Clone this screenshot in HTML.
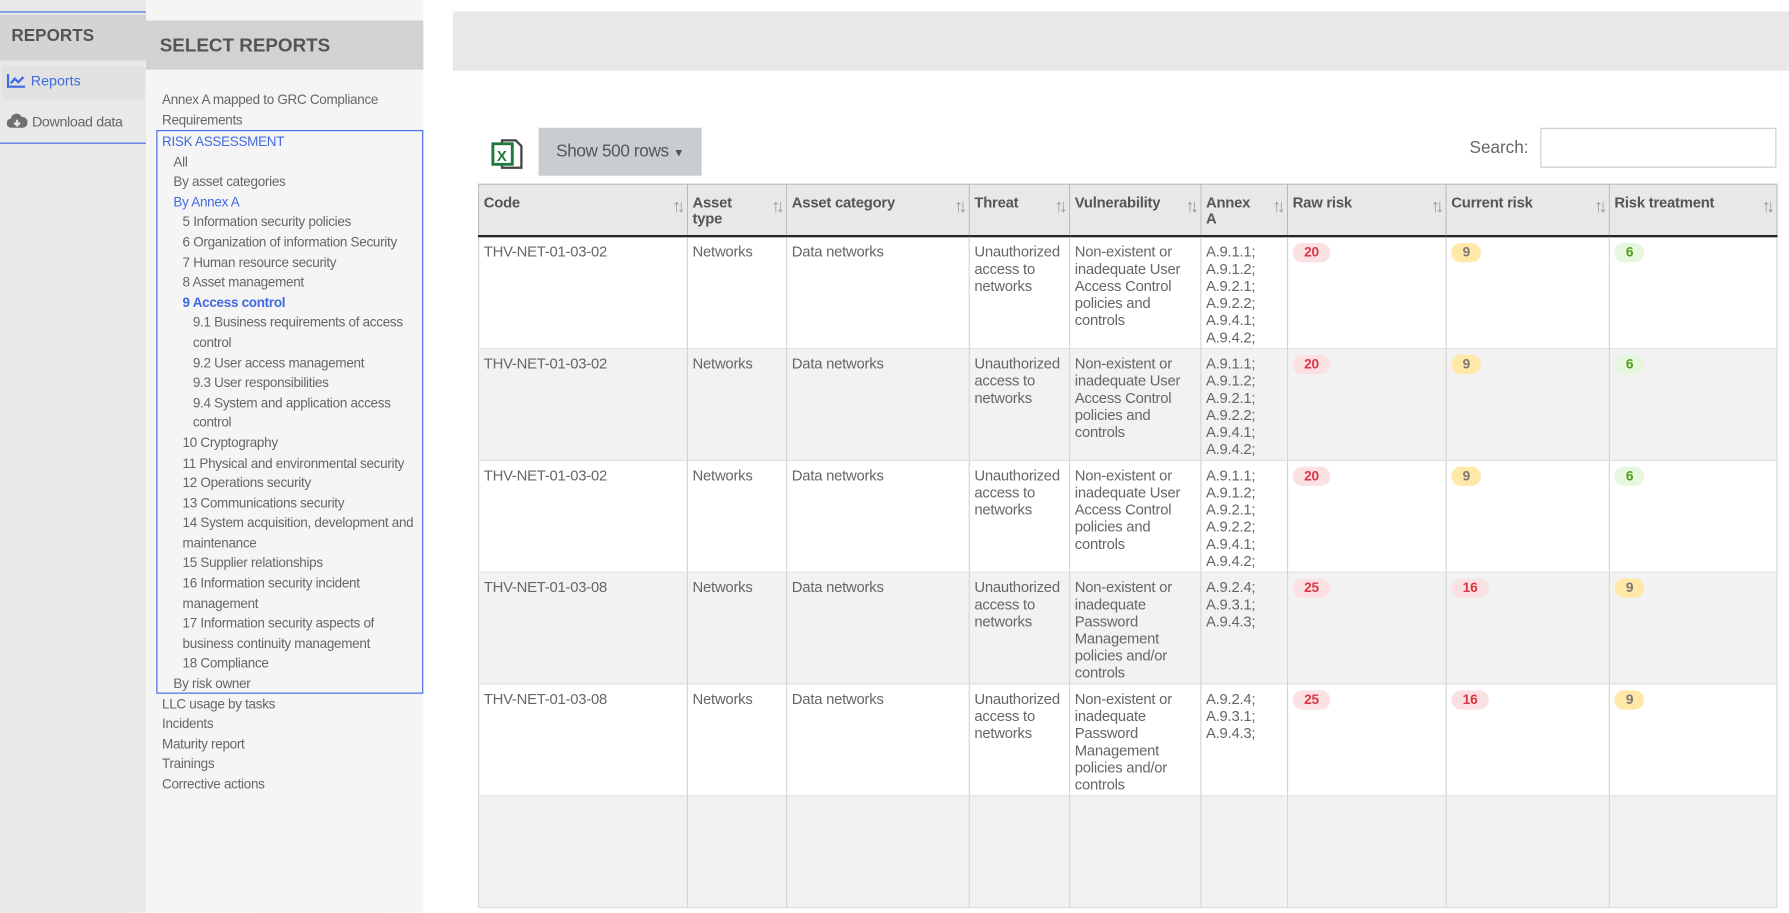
<!DOCTYPE html>
<html><head><meta charset="utf-8"><style>
html,body{margin:0;padding:0;width:1789px;height:795px;overflow:hidden;background:#fff}
#w{position:absolute;left:0;top:0;width:1568px;height:697px;transform:scale(1.14094);transform-origin:0 0;font-family:"Liberation Sans",sans-serif;color:#666;font-size:12.5px}
.a{position:absolute}
#c1{left:0;top:0;width:128px;height:800px;background:#e9e9e9}
#c2{left:128px;top:0;width:243px;height:800px;background:#f5f5f5}
.sb{position:absolute;left:0;width:243px;line-height:17.6px;white-space:nowrap;font-size:11.8px;letter-spacing:-0.25px}
.sb div{height:17.6px}
.blue{color:#4169e1}
table{border-collapse:collapse;position:absolute;left:419px;top:161px;width:1138px;table-layout:fixed}
th{background:#e8e8e8;border:1px solid #b8b8b8;border-bottom:2px solid #222;text-align:left;vertical-align:top;font-weight:bold;padding:9px 4px 0 4px;height:35px;line-height:14px;color:#555;font-size:13px;position:relative;letter-spacing:-0.2px}
th span.s{position:absolute;right:5px;top:13px;font-weight:normal;color:#999;font-size:16px;letter-spacing:-4px}
td{border-left:1px solid #d4d4d4;border-right:1px solid #d4d4d4;vertical-align:top;padding:5px 4px 0 4px;height:92px;line-height:15px;font-size:13px;letter-spacing:-0.2px}
tr.e td{background:#f2f2f2}
tr{border-bottom:1px solid #e0e0e0}
.p{display:inline-block;border-radius:9px;padding:0 10px;height:17px;line-height:17px;font-weight:bold;font-size:12px}
.r{background:#fbe1e3;color:#dc3545}.y{background:#ffe8a8;color:#777}.g{background:#e6f6df;color:#4aa117}
</style></head><body><div id="w">
<div id="c1" class="a">
<div class="a" style="left:0;top:10px;width:128px;border-top:1px solid #4169e1"></div>
<div class="a" style="left:0;top:13px;width:128px;height:40px;background:#d4d4d4;font-weight:bold;font-size:15px;color:#555;line-height:38px;padding-left:10px;box-sizing:border-box">REPORTS</div>
<div class="a" style="left:1px;top:57px;width:126px;height:30px;background:#e2e2e2;border-radius:4px;color:#4169e1;line-height:28px;font-size:12.5px">
<svg class="a" style="left:5px;top:7px" width="17" height="13" viewBox="0 0 17 13"><path d="M1 1V12H16" stroke="#4169e1" stroke-width="2" fill="none"/><path d="M3.5 9L7 5L10 8L14.5 3.5" stroke="#4169e1" stroke-width="2" fill="none"/></svg><span style="position:absolute;left:26px">Reports</span></div>
<div class="a" style="left:6px;top:99px;font-size:12.5px;line-height:16px"><svg style="position:absolute;left:0;top:0" width="18" height="15" viewBox="0 0 18 15"><path d="M4 13a4 4 0 0 1-.5-8A5 5 0 0 1 13 3.5a4.5 4.5 0 0 1 1 9.5z" fill="#707070"/><path d="M9 6v4.5M6.5 8.5L9 11l2.5-2.5" stroke="#e9e9e9" stroke-width="1.8" fill="none"/></svg><span style="position:absolute;left:22px;white-space:nowrap;letter-spacing:-0.3px">Download data</span></div>
<div class="a" style="left:0;top:125px;width:128px;border-top:1px solid #4169e1"></div>
</div>
<div id="c2" class="a">
<div class="a" style="left:0;top:18px;width:243px;height:43px;background:#d2d2d2;font-weight:bold;font-size:16.5px;color:#555;line-height:44px;padding-left:12px;box-sizing:border-box">SELECT REPORTS</div>
<div class="sb" style="top:79px;left:14px">
<div>Annex A mapped to GRC Compliance</div><div>Requirements</div></div>
<div class="a" style="left:9px;top:114px;width:232px;height:492px;border:1px solid #4169e1"></div>
<div class="sb" style="top:116px;left:14px">
<div class="blue">RISK ASSESSMENT</div>
<div style="padding-left:10px">All</div>
<div style="padding-left:10px">By asset categories</div>
<div style="padding-left:10px" class="blue">By Annex A</div>
<div style="padding-left:18px">5 Information security policies</div>
<div style="padding-left:18px">6 Organization of information Security</div>
<div style="padding-left:18px">7 Human resource security</div>
<div style="padding-left:18px">8 Asset management</div>
<div style="padding-left:18px;font-weight:bold" class="blue">9 Access control</div>
<div style="padding-left:27px">9.1 Business requirements of access</div>
<div style="padding-left:27px">control</div>
<div style="padding-left:27px">9.2 User access management</div>
<div style="padding-left:27px">9.3 User responsibilities</div>
<div style="padding-left:27px">9.4 System and application access</div>
<div style="padding-left:27px">control</div>
<div style="padding-left:18px">10 Cryptography</div>
<div style="padding-left:18px">11 Physical and environmental security</div>
<div style="padding-left:18px">12 Operations security</div>
<div style="padding-left:18px">13 Communications security</div>
<div style="padding-left:18px">14 System acquisition, development and</div>
<div style="padding-left:18px">maintenance</div>
<div style="padding-left:18px">15 Supplier relationships</div>
<div style="padding-left:18px">16 Information security incident</div>
<div style="padding-left:18px">management</div>
<div style="padding-left:18px">17 Information security aspects of</div>
<div style="padding-left:18px">business continuity management</div>
<div style="padding-left:18px">18 Compliance</div>
<div style="padding-left:10px">By risk owner</div>
<div>LLC usage by tasks</div><div>Incidents</div><div>Maturity report</div><div>Trainings</div><div>Corrective actions</div>
</div>
</div>
<div class="a" style="left:397px;top:10px;width:1171px;height:52px;background:#e8e8e8"></div>
<svg class="a" style="left:430px;top:120px" width="32" height="30" viewBox="0 0 32 30"><path d="M10 3h12l5 5v19H10z" fill="#fff" stroke="#444" stroke-width="2"/><rect x="2" y="6" width="17" height="18" fill="#fff" stroke="#1e7a3c" stroke-width="2.5"/><text x="5.5" y="21" font-family="Liberation Sans" font-weight="bold" font-size="13" fill="#1e7a3c">X</text></svg>
<div class="a" style="left:472px;top:112px;width:143px;height:42px;background:#c9cdd1;font-size:15px;line-height:42px;text-align:center;color:#555;letter-spacing:-0.3px">Show 500 rows <span style="font-size:10px">&#9660;</span></div>
<div class="a" style="left:1288px;top:121px;font-size:15px">Search:</div>
<div class="a" style="left:1350px;top:112px;width:205px;height:33px;border:1px solid #ccc;background:#fff"></div>
<table>
<colgroup><col style="width:183px"><col style="width:87px"><col style="width:160px"><col style="width:88px"><col style="width:115px"><col style="width:76px"><col style="width:139px"><col style="width:143px"><col style="width:147px"></colgroup>
<tr><th>Code<span class="s">↑↓</span></th><th>Asset<br>type<span class="s">↑↓</span></th><th>Asset category<span class="s">↑↓</span></th><th>Threat<span class="s">↑↓</span></th><th>Vulnerability<span class="s">↑↓</span></th><th>Annex<br>A<span class="s">↑↓</span></th><th>Raw risk<span class="s">↑↓</span></th><th>Current risk<span class="s">↑↓</span></th><th>Risk treatment<span class="s">↑↓</span></th></tr>
<tr><td>THV-NET-01-03-02</td><td>Networks</td><td>Data networks</td><td>Unauthorized access to networks</td><td>Non-existent or inadequate User Access Control policies and controls</td><td>A.9.1.1;<br>A.9.1.2;<br>A.9.2.1;<br>A.9.2.2;<br>A.9.4.1;<br>A.9.4.2;</td><td><span class="p r">20</span></td><td><span class="p y">9</span></td><td><span class="p g">6</span></td></tr>
<tr class="e"><td>THV-NET-01-03-02</td><td>Networks</td><td>Data networks</td><td>Unauthorized access to networks</td><td>Non-existent or inadequate User Access Control policies and controls</td><td>A.9.1.1;<br>A.9.1.2;<br>A.9.2.1;<br>A.9.2.2;<br>A.9.4.1;<br>A.9.4.2;</td><td><span class="p r">20</span></td><td><span class="p y">9</span></td><td><span class="p g">6</span></td></tr>
<tr><td>THV-NET-01-03-02</td><td>Networks</td><td>Data networks</td><td>Unauthorized access to networks</td><td>Non-existent or inadequate User Access Control policies and controls</td><td>A.9.1.1;<br>A.9.1.2;<br>A.9.2.1;<br>A.9.2.2;<br>A.9.4.1;<br>A.9.4.2;</td><td><span class="p r">20</span></td><td><span class="p y">9</span></td><td><span class="p g">6</span></td></tr>
<tr class="e"><td>THV-NET-01-03-08</td><td>Networks</td><td>Data networks</td><td>Unauthorized access to networks</td><td>Non-existent or inadequate Password Management policies and/or controls</td><td>A.9.2.4;<br>A.9.3.1;<br>A.9.4.3;</td><td><span class="p r">25</span></td><td><span class="p r">16</span></td><td><span class="p y">9</span></td></tr>
<tr><td>THV-NET-01-03-08</td><td>Networks</td><td>Data networks</td><td>Unauthorized access to networks</td><td>Non-existent or inadequate Password Management policies and/or controls</td><td>A.9.2.4;<br>A.9.3.1;<br>A.9.4.3;</td><td><span class="p r">25</span></td><td><span class="p r">16</span></td><td><span class="p y">9</span></td></tr>
<tr class="e"><td></td><td></td><td></td><td></td><td></td><td></td><td></td><td></td><td></td></tr>
</table>
</div></body></html>
